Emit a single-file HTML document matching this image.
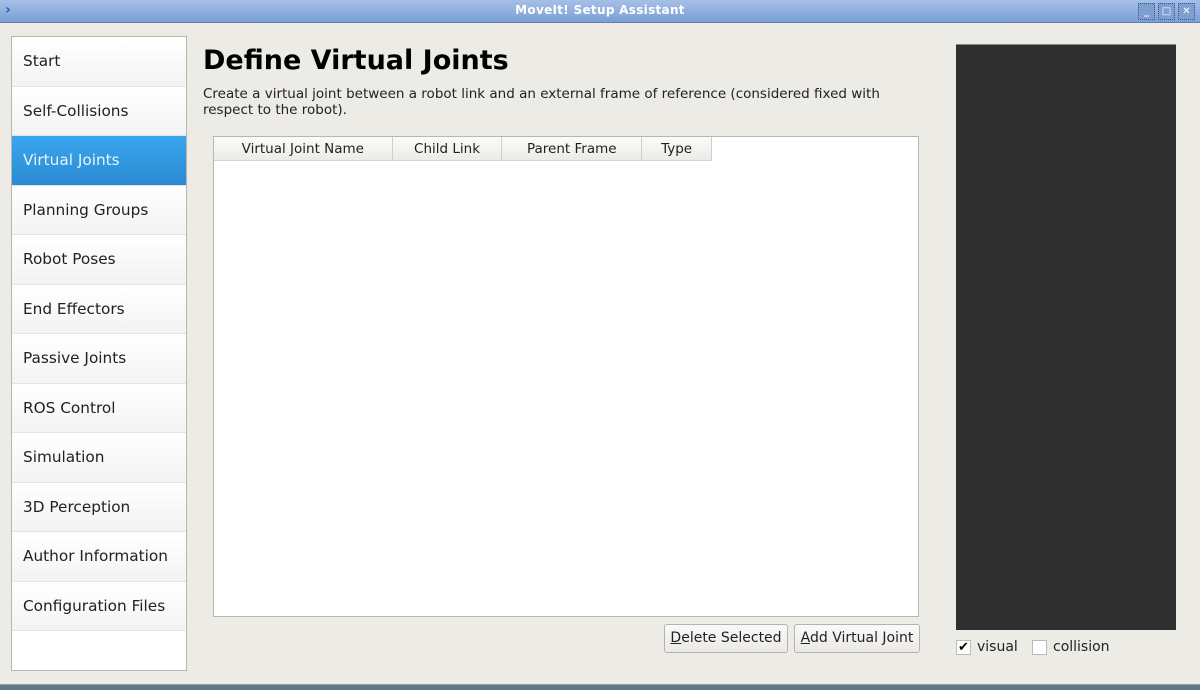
<!DOCTYPE html>
<html><head><meta charset="utf-8"><style>
body{margin:0;width:1200px;height:689px;overflow:hidden;background:#edebe6;font-family:"DejaVu Sans","Liberation Sans",sans-serif;position:relative}
.tb{position:absolute;left:0;top:0;width:1200px;height:22px;background:linear-gradient(#a6bfe6,#7a9fd6);border-bottom:1px solid #5d7fb5}
.tb .t{position:absolute;left:0;right:0;top:3px;text-align:center;color:#fff;font-size:12px;font-weight:bold;letter-spacing:.3px}
.wb{position:absolute;top:3px;width:15px;height:15px;border:1px dotted #35598f;background:#7f9fd0;color:#fff;font-size:10px;text-align:center;line-height:15px;font-weight:bold}
.side{position:absolute;left:11px;top:36px;width:174px;height:633px;background:#fff;border:1px solid #b9b6b0}
.it{height:49.5px;line-height:48px;padding-left:11px;font-size:15.3px;color:#222;background:linear-gradient(#fff,#f3f3f3);border-bottom:1px solid #e4e4e4;box-sizing:border-box}
.it.sel{background:linear-gradient(#3aa6ee,#2a8bd2);color:#e8f3fc}
h1{position:absolute;left:203px;top:45px;margin:0;font-size:27px;font-weight:bold;color:#000}
.desc{position:absolute;left:203px;top:86px;width:725px;font-size:13.5px;line-height:16px;color:#222}
.tbl{position:absolute;left:213px;top:136px;width:704px;height:479px;background:#fff;border:1px solid #b9b6b0}
.hd{display:flex;height:23px;background:linear-gradient(#fbfbfa,#ecebe8);border-bottom:1px solid #d6d4cf;width:498px;font-size:13.5px;color:#222}
.hd div{border-right:1px solid #d0cec9;text-align:center;line-height:24px}
.btn{position:absolute;top:624px;height:27px;border:1px solid #b6b3ad;border-radius:3px;background:linear-gradient(#fafafa,#ebe9e5);font-size:14px;line-height:26px;text-align:center;color:#222}
.view{position:absolute;left:956px;top:44px;width:220px;height:585px;background:#2f2f2f;border-top:1px solid #888}
.cb{position:absolute;top:640px;width:13px;height:13px;background:#fff;border:1px solid #bbb;font-size:13px;line-height:13px;text-align:center}
.lbl{position:absolute;top:639px;font-size:14px;color:#222}
</style></head><body>
<div class="tb"><span style="position:absolute;left:5px;top:2px;color:#1b5fd0;font-weight:bold;font-size:14px">›</span><div class="t">MoveIt! Setup Assistant</div>
<div class="wb" style="left:1138px">_</div><div class="wb" style="left:1158px">□</div><div class="wb" style="left:1178px">✕</div></div>
<div class="side">
<div class="it">Start</div><div class="it">Self-Collisions</div><div class="it sel">Virtual Joints</div><div class="it">Planning Groups</div><div class="it">Robot Poses</div><div class="it">End Effectors</div><div class="it">Passive Joints</div><div class="it">ROS Control</div><div class="it">Simulation</div><div class="it">3D Perception</div><div class="it">Author Information</div><div class="it">Configuration Files</div>
</div>
<h1>Define Virtual Joints</h1>
<div class="desc">Create a virtual joint between a robot link and an external frame of reference (considered fixed with respect to the robot).</div>
<div class="tbl"><div class="hd"><div style="width:178px">Virtual Joint Name</div><div style="width:109px">Child Link</div><div style="width:139px">Parent Frame</div><div style="width:69px">Type</div></div></div>
<div class="btn" style="left:664px;width:122px"><u>D</u>elete Selected</div>
<div class="btn" style="left:794px;width:124px"><u>A</u>dd Virtual Joint</div>
<div class="view"></div>
<div class="cb" style="left:956px">✔</div><div class="lbl" style="left:977px">visual</div>
<div class="cb" style="left:1032px"></div><div class="lbl" style="left:1053px">collision</div>
<div style="position:absolute;left:0;top:684px;width:1200px;height:5px;background:#5a7a8e;border-top:1px solid #999"></div>
</body></html>
